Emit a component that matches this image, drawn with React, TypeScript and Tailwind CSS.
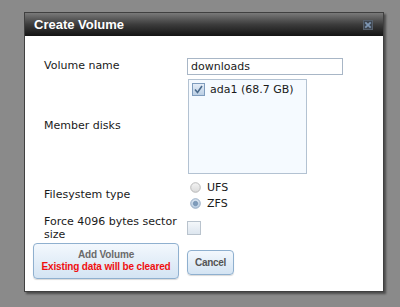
import React from "react";

function Radio({ checked }: { checked?: boolean }) {
  return (
    <svg width="11" height="11" viewBox="0 0 11 11" className="shrink-0">
      <defs>
        <linearGradient id={checked ? "rg1" : "rg0"} x1="0" y1="0" x2="0" y2="1">
          <stop offset="0" stopColor={checked ? "#dbe6f2" : "#f4f4f4"} />
          <stop offset="1" stopColor={checked ? "#b7cbe0" : "#dadada"} />
        </linearGradient>
      </defs>
      <circle cx="5.5" cy="5.5" r="4.8" fill={`url(#${checked ? "rg1" : "rg0"})`} stroke={checked ? "#8ea6bf" : "#b3b3b3"} strokeWidth="0.9" />
      {checked && <circle cx="5.5" cy="5.5" r="2.2" fill="#7f9cbc" stroke="#5f7f9f" strokeWidth="0.5" />}
    </svg>
  );
}

export default function App() {
  return (
    <div
      className="w-[400px] h-[307px] bg-[#8a8a8a] pl-[24px] pt-[12px] overflow-hidden"
      style={{ fontFamily: '"DejaVu Sans", Verdana, sans-serif' }}
    >
      <div className="w-[360px] border border-[#404040] bg-white shadow-[2px_2px_2px_rgba(0,0,0,0.45)]">
        {/* title bar */}
        <div className="h-[23px] flex items-center justify-between pl-[9px] pr-[10px] bg-gradient-to-b from-[#7a7a7a] via-[#3c3c3c] to-[#151515]">
          <span
            className="text-white font-bold text-[13px] leading-none"
            style={{ fontFamily: '"Liberation Sans", Arial, sans-serif' }}
          >
            Create Volume
          </span>
          <svg width="10" height="10" viewBox="0 0 10 10">
            <rect x="0.5" y="0.5" width="9" height="9" fill="#3e4650" stroke="#56606c" />
            <path d="M2.3 2.3 L7.7 7.7 M7.7 2.3 L2.3 7.7" stroke="#7e97b4" strokeWidth="1.8" />
          </svg>
        </div>

        {/* content */}
        <div className="pl-[19px] pt-[22px] pb-[12px] text-[11px] text-[#1a1a1a]">
          {/* Volume name */}
          <div className="flex items-center h-[17px]">
            <div className="w-[143px]">Volume name</div>
            <div className="w-[156px] h-[17px] border border-[#a8b6c6] bg-white pl-[3px] flex items-center leading-none">
              downloads
            </div>
          </div>

          {/* Member disks */}
          <div className="flex items-center mt-[4px]">
            <div className="w-[144px]">Member disks</div>
            <div className="w-[119px] h-[95px] border border-[#b3c2d2] bg-[#f5faff] pt-[3px] pl-[3px]">
              <div className="flex items-center gap-[5px]">
                <svg width="13" height="13" viewBox="0 0 13 13">
                  <defs>
                    <linearGradient id="cb" x1="0" y1="0" x2="0" y2="1">
                      <stop offset="0" stopColor="#e6eef8" />
                      <stop offset="1" stopColor="#b9cde3" />
                    </linearGradient>
                  </defs>
                  <rect x="0.5" y="0.5" width="12" height="12" fill="url(#cb)" stroke="#7f9cbd" />
                  <path d="M3 6.5 L5.5 9.5 L10 3" fill="none" stroke="#4a6a8c" strokeWidth="1.6" />
                </svg>
                <span className="leading-none">ada1 (68.7 GB)</span>
              </div>
            </div>
          </div>

          {/* Filesystem type */}
          <div className="flex items-center mt-[8px]">
            <div className="w-[146px]">Filesystem type</div>
            <div className="flex flex-col gap-[5px]">
              <div className="flex items-center gap-[6px] h-[11px]">
                <Radio />
                <span className="leading-none">UFS</span>
              </div>
              <div className="flex items-center gap-[6px] h-[11px]">
                <Radio checked />
                <span className="leading-none">ZFS</span>
              </div>
            </div>
          </div>

          {/* Force 4096 */}
          <div className="flex items-center mt-[6px]">
            <div className="w-[143px] leading-[13px] pr-[6px]">Force 4096 bytes sector size</div>
            <div className="w-[14px] h-[14px] border border-[#b9c3cd] bg-gradient-to-b from-[#f4f7fa] to-[#dde6ef]" />
          </div>

          {/* Buttons */}
          <div
            className="flex items-center gap-[8px] mt-[2px] -ml-[11px] font-bold"
            style={{ fontFamily: '"Liberation Sans", Arial, sans-serif' }}
          >
            <div className="w-[146px] h-[36px] rounded-[4px] border border-[#8fb0cf] bg-gradient-to-b from-[#f3f8fd] to-[#d4e4f3] flex flex-col items-center justify-center text-[10px] leading-[12px] tracking-[-0.15px] shadow-[0_1px_1px_rgba(0,0,0,0.15)]">
              <span className="text-[#6a6a6a]">Add Volume</span>
              <span className="text-[#f01010]">Existing data will be cleared</span>
            </div>
            <div className="w-[47px] h-[25px] rounded-[4px] border border-[#8fb0cf] bg-gradient-to-b from-[#f3f8fd] to-[#d4e4f3] flex items-center justify-center text-[10px] tracking-[-0.3px] text-[#555] shadow-[0_1px_1px_rgba(0,0,0,0.15)] mt-[2px]">
              Cancel
            </div>
          </div>
        </div>
      </div>
    </div>
  );
}
